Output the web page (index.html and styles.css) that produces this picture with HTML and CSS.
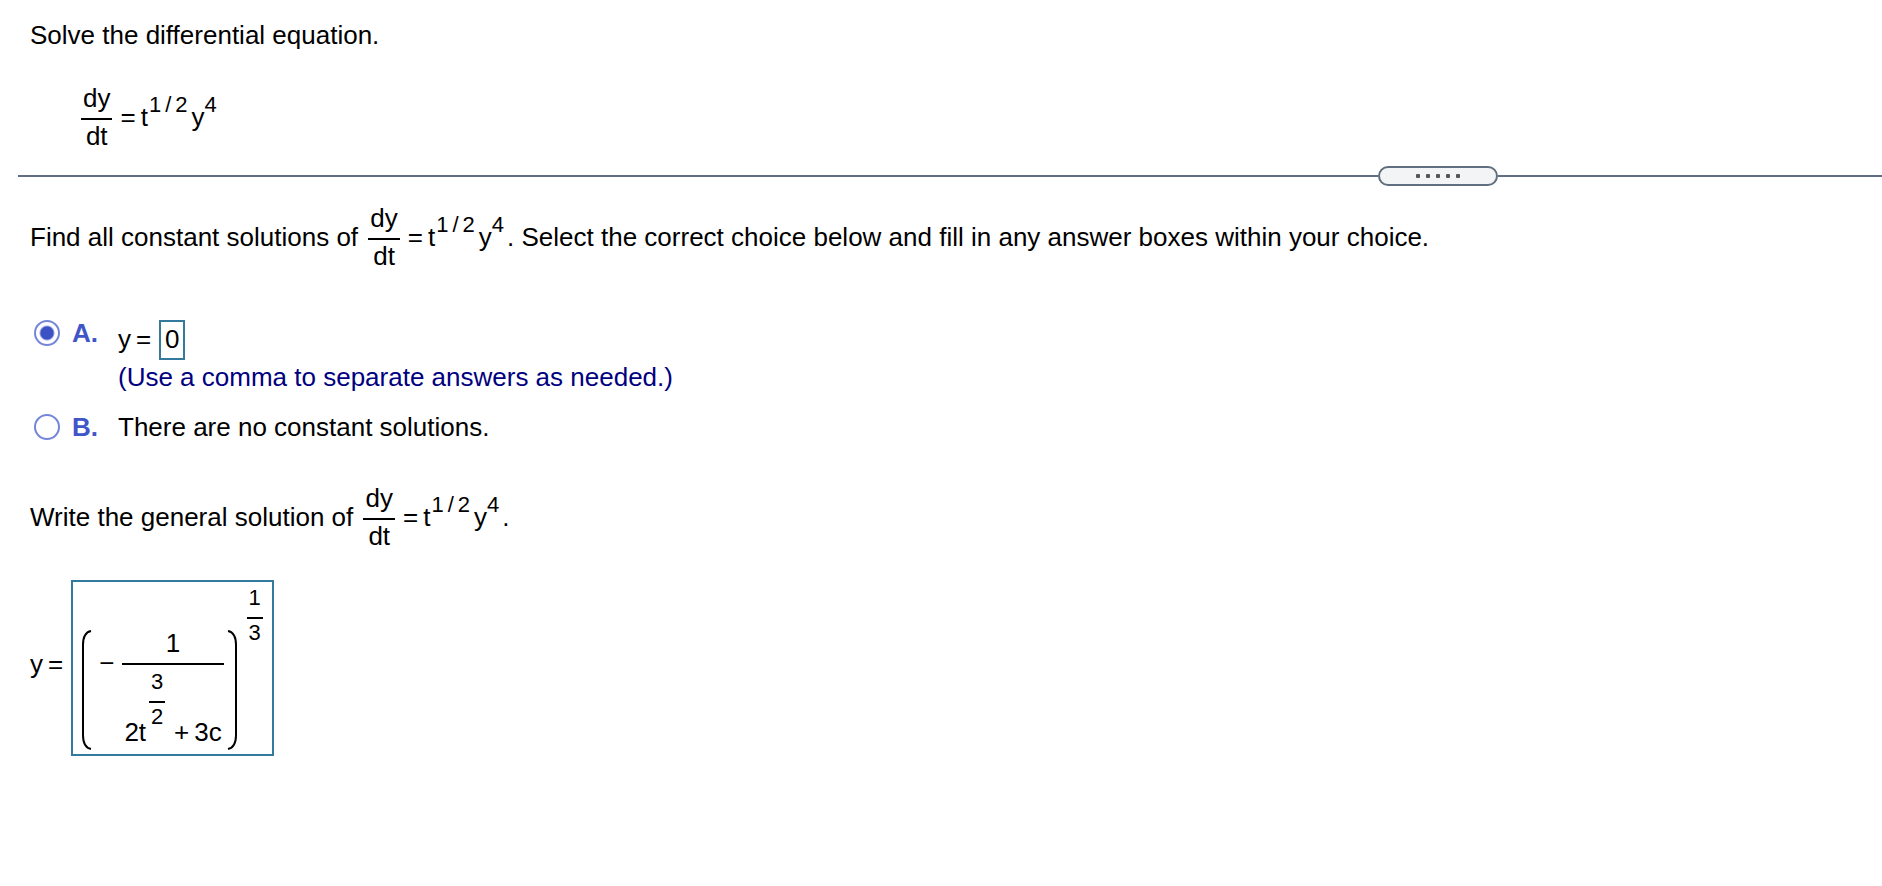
FILE: index.html
```html
<!DOCTYPE html>
<html lang="en">
<head>
  <meta charset="UTF-8">
  <meta name="viewport" content="width=device-width, initial-scale=1.0">
  <title>Differential Equation</title>
  <link rel="stylesheet" href="styles.css">
</head>
<body>
  <header class="question">
    <p>Solve the differential equation.</p>
    <div class="equation">
      <span class="math"><span class="frac"><span class="num">dy</span><span class="den">dt</span></span><span class="eq">=</span>t<sup class="exp">1<span class="slash">/</span>2</sup>y<sup>4</sup></span>
    </div>
  </header>

  <div class="divider">
    <button class="handle" type="button" aria-label="Resize panels">
      <i></i><i></i><i></i><i></i><i></i>
    </button>
  </div>

  <main class="answer">
    <p>Find all constant solutions of <span class="math"><span class="frac"><span class="num">dy</span><span class="den">dt</span></span><span class="eq">=</span>t<sup class="exp">1<span class="slash">/</span>2</sup>y<sup>4</sup></span><span class="stop">.</span> Select the correct choice below and fill in any answer boxes within your choice.</p>

    <div class="choices">
      <div class="choice">
        <input type="radio" name="choice" id="choice-a" checked>
        <label class="letter" for="choice-a">A.</label>
        <div class="choice-body">
          <div class="fill">
            <label class="fill-label" for="constant">y<span class="eq-sign">=</span></label>
            <input type="text" id="constant" class="answer-box" value="0" autocomplete="off">
          </div>
          <p class="hint">(Use a comma to separate answers as needed.)</p>
        </div>
      </div>
      <div class="choice">
        <input type="radio" name="choice" id="choice-b">
        <label class="letter" for="choice-b">B.</label>
        <label class="choice-body" for="choice-b">There are no constant solutions.</label>
      </div>
    </div>

    <p>Write the general solution of <span class="math"><span class="frac"><span class="num">dy</span><span class="den">dt</span></span><span class="eq">=</span>t<sup class="exp">1<span class="slash">/</span>2</sup>y<sup>4</sup></span><span class="stop">.</span></p>

    <div class="solution">
      <span class="solution-label" id="solution-label">y<span class="eq-sign">=</span></span>
      <div class="math-box" role="textbox" tabindex="0" aria-labelledby="solution-label">
        <div class="group">
          <svg class="paren" width="10" height="120" viewBox="0 0 10 120" aria-hidden="true">
            <path d="M9 1C4 2 1 7 1 15V105C1 113 4 118 9 119" />
          </svg>
          <span class="minus">−</span>
          <div class="big-frac">
            <div class="big-num">1</div>
            <div class="big-den">
              <span>2t</span>
              <span class="small-frac raised"><span class="num">3</span><span class="den">2</span></span>
              <span class="plus">+</span>
              <span>3c</span>
            </div>
          </div>
          <svg class="paren" width="10" height="120" viewBox="0 0 10 120" aria-hidden="true">
            <path d="M1 1C6 2 9 7 9 15V105C9 113 6 118 1 119" />
          </svg>
        </div>
        <span class="small-frac"><span class="num">1</span><span class="den">3</span></span>
      </div>
    </div>
  </main>
</body>
</html>
```

FILE: styles.css
```css
/* Page */
* {
  box-sizing: border-box;
}

body {
  margin: 0;
  padding: 19px 0 0 18px;
  font-family: Arial, "Liberation Sans", sans-serif;
  font-size: 26px;
  line-height: 32px;
  color: #000000;
  background: #ffffff;
}

p {
  margin: 0;
}

.question,
.answer {
  padding-left: 12px;
}

.equation {
  margin: 31px 0 10px 48px;
}

/* Inline math */
.math {
  white-space: nowrap;
}

.frac {
  display: inline-block;
  vertical-align: middle;
  margin: 0 8px 0 3px;
  padding-bottom: 4px;
  text-align: center;
}

.frac .num,
.frac .den {
  display: block;
  padding: 0 2px;
}

.frac .num {
  padding-bottom: 4px;
  border-bottom: 2px solid #000000;
}

.eq {
  margin-right: 5px;
}

sup {
  font-size: 22px;
  line-height: 0;
  vertical-align: 14px;
}

.exp {
  margin: 0 4px 0 1px;
}

.slash {
  margin: 0 4px;
}

.stop {
  margin-left: 3px;
}

/* Divider with drag handle */
.divider {
  display: flex;
  align-items: center;
  margin-bottom: 16px;
}

.divider::before,
.divider::after {
  content: "";
  height: 2px;
  background: #5f6f7f;
}

.divider::before {
  flex: 1360;
}

.divider::after {
  flex: 384;
}

.handle {
  display: flex;
  justify-content: center;
  align-items: center;
  gap: 6px;
  width: 120px;
  height: 20px;
  padding: 0;
  border: 2px solid #5f6f7f;
  border-radius: 10px;
  background: #f3f4f6;
  cursor: row-resize;
}

.handle i {
  width: 4px;
  height: 4px;
  border-radius: 1px;
  background: #555555;
}

/* Choices */
.choices {
  display: flex;
  flex-direction: column;
  gap: 18px;
  margin: 41px 0 39px;
}

.choice {
  display: flex;
  align-items: flex-start;
}

.choice input[type="radio"] {
  appearance: none;
  width: 26px;
  height: 26px;
  margin: 3px 12px 0 4px;
  border: 2px solid #7486da;
  border-radius: 50%;
  background: #ffffff;
}

.choice input[type="radio"]:checked {
  background: radial-gradient(circle, #3c51c4 6px, #ffffff 8px);
}

.letter {
  width: 46px;
  font-weight: bold;
  color: #4055c8;
}

.fill {
  display: flex;
  align-items: center;
  height: 40px;
  margin: 3px 0 1px;
}

.fill-label {
  padding-bottom: 2px;
}

.eq-sign {
  margin-left: 5px;
}

.answer-box {
  width: 26px;
  height: 40px;
  margin-left: 8px;
  padding: 0 0 2px;
  border: 2px solid #337a9d;
  font: inherit;
  text-align: center;
  outline: none;
}

.hint {
  color: #000080;
}

/* General solution */
.solution {
  display: flex;
  align-items: center;
  margin-top: 24px;
}

.solution-label {
  padding-bottom: 8px;
}

.math-box {
  display: flex;
  align-items: flex-start;
  margin-left: 8px;
  padding: 3px 9px 4px;
  border: 2px solid #337a9d;
}

.group {
  display: flex;
  align-items: flex-start;
  margin: 45px 10px 0 0;
}

.paren {
  fill: none;
  stroke: #000000;
  stroke-width: 2;
}

.minus {
  margin: 17px 8px 0 7px;
}

.big-frac {
  margin-right: 3px;
}

.big-num {
  padding-bottom: 4px;
  margin-top: -3px;
  border-bottom: 2px solid #000000;
  text-align: center;
}

.big-den {
  display: flex;
  align-items: flex-end;
  padding: 4px 2px 0;
}

.small-frac {
  display: inline-block;
  min-width: 16px;
  font-size: 22px;
  line-height: 26px;
  text-align: center;
}

.small-frac .num,
.small-frac .den {
  display: block;
}

.small-frac .num {
  padding-bottom: 6px;
  margin-bottom: 1px;
  border-bottom: 2px solid #000000;
}

.raised {
  margin: 0 9px 18px 3px;
}

.plus {
  margin-right: 5px;
}
```
